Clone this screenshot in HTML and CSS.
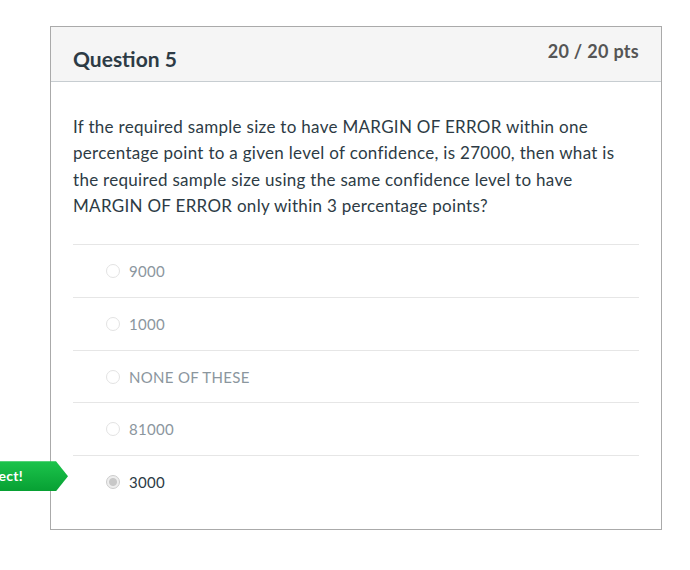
FILE: index.html
```html
<!DOCTYPE html>
<html lang="en">
<head>
    <meta charset="UTF-8">
    <title>Question 5</title>
    <link rel="stylesheet" href="styles.css">
</head>
<body>

<div class="question">
    <div class="question-header">
        <h2>Question 5</h2>
        <span class="points">20 / 20 pts</span>
    </div>
    <div class="question-body">
        <p class="question-text">If the required sample size to have MARGIN OF ERROR within one percentage point to a given level of confidence, is 27000, then what is the required sample size using the same confidence level to have MARGIN OF ERROR only within 3 percentage points?</p>

        <div class="answers">
            <div class="answer"><span class="radio"></span>9000</div>
            <div class="answer"><span class="radio"></span>1000</div>
            <div class="answer"><span class="radio"></span>NONE OF THESE</div>
            <div class="answer"><span class="radio"></span>81000</div>
            <div class="answer selected">
                <span class="radio"></span>3000
                <span class="flag">Correct!</span>
            </div>
        </div>
    </div>
</div>

</body>
</html>
```

FILE: styles.css
```css
body {
    margin: 0;
    font-family: Lato, "Helvetica Neue", Arial, sans-serif;
    color: #2d3b45;
    background: #fff;
}
.question {
    margin: 26px 0 0 50px;
    width: 610px;
    border: 1px solid #aaa;
}
.question-header {
    display: flex;
    justify-content: space-between;
    align-items: flex-start;
    height: 54px;
    padding: 0 22px;
    background: #f5f5f5;
    border-bottom: 1px solid #c7cdd1;
}
.question-header h2 {
    margin: 20px 0 0;
    font-size: 21px;
    font-weight: 700;
    line-height: 24px;
}
.points {
    margin-top: 14px;
    font-size: 18px;
    font-weight: 700;
    line-height: 20px;
    letter-spacing: 0.3px;
    color: #555;
}
.question-body {
    padding: 32px 22px 21px;
}
.question-text {
    margin: 0 0 25px;
    font-size: 17px;
    line-height: 26.3px;
    letter-spacing: 0.3px;
}
.answer {
    position: relative;
    display: flex;
    align-items: center;
    height: 51.75px;
    padding-left: 33px;
    border-top: 1px solid #e6e6e6;
    font-size: 15px;
    letter-spacing: 0.3px;
    color: #8b969e;
}
.answer.selected {
    color: #2d3b45;
}
.radio {
    width: 12px;
    height: 12px;
    margin-right: 9px;
    border: 1px solid #e3e3e3;
    border-radius: 50%;
    background: #fff;
}
.selected .radio {
    border-color: #ccc;
    background: radial-gradient(circle, #c8c8c8 0 3.5px, #eee 4.5px);
}
.flag {
    position: absolute;
    left: -105px;
    top: 5px;
    width: 100px;
    height: 30px;
    padding-right: 45px;
    box-sizing: border-box;
    clip-path: polygon(0 0, 88% 0, 100% 50%, 88% 100%, 0 100%);
    background: linear-gradient(#1cc44c, #07a033);
    color: #fff;
    font-size: 14px;
    font-weight: 700;
    line-height: 30px;
    text-align: right;
}
```
